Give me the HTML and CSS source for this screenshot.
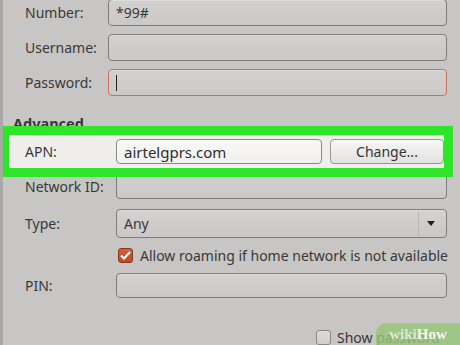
FILE: index.html
```html
<!DOCTYPE html>
<html>
<head>
<meta charset="utf-8">
<link rel="stylesheet" href="styles.css">
</head>
<body>
<div class="window">
  <div class="top">
    <label class="label">Number:</label>
    <div class="field">*99#</div>
    <label class="label">Username:</label>
    <div class="field"></div>
    <label class="label">Password:</label>
    <div class="field field-error"><span class="caret"></span></div>
  </div>
  <div class="section-title">Advanced</div>
  <div class="highlight">
    <label class="label apn-label">APN:</label>
    <div class="field field-light apn-field">airtelgprs.com</div>
    <button class="button">Change...</button>
  </div>
  <div class="lower">
    <label class="label">Network ID:</label>
    <div class="field"></div>
    <label class="label">Type:</label>
    <div class="field combo"><span class="combo-text">Any</span><span class="combo-sep"></span><span class="combo-arrow"></span></div>
    <div class="check-row">
      <span class="checkbox checked"><svg width="11" height="9" viewBox="0 0 11 9"><path d="M1 4.5 L4 7.5 L10 1" fill="none" stroke="#fff" stroke-width="2"/></svg></span>
      <span>Allow roaming if home network is not available</span>
    </div>
    <label class="label">PIN:</label>
    <div class="field"></div>
  </div>
  <div class="show-row">
    <span class="checkbox"></span>
    <span>Show password</span>
  </div>
  <div class="watermark"><span class="wm-wiki">wiki</span><span class="wm-how">How</span></div>
</div>
</body>
</html>
```

FILE: styles.css
```css
html, body {
  margin: 0;
  height: 100%;
  overflow: hidden;
}
body {
  background: #c7c6c4;
  font-family: "Noto Sans", "Open Sans", sans-serif;
  font-size: 14px;
  color: #383838;
}
.window {
  position: relative;
  height: 345px;
  box-sizing: border-box;
  border-left: 3px solid #a9a8a6;
  overflow: hidden;
}
.top {
  display: grid;
  grid-template-columns: 83px 339px;
  row-gap: 8px;
  align-items: center;
  padding-left: 22px;
  margin-top: -1px;
}
.label {
  white-space: nowrap;
}
.field {
  height: 27px;
  box-sizing: border-box;
  border: 1px solid #7f7d7b;
  border-radius: 4px;
  background: linear-gradient(#d2d1cf, #cac9c7);
  display: flex;
  align-items: center;
  padding-left: 7px;
  box-shadow: inset 0 1px 0 rgba(255,255,255,0.25);
}
.field-error {
  border-color: #cf6e5c;
}
.caret {
  width: 1px;
  height: 16px;
  background: #222;
}
.section-title {
  margin-top: 17px;
  height: 13px;
  line-height: 20px;
  padding-left: 10px;
  font-weight: bold;
  font-size: 14.5px;
}
.highlight {
  position: relative;
  z-index: 2;
  margin-left: -3px;
  width: 453px;
  height: 51px;
  box-sizing: border-box;
  border: 9px solid #2fe52a;
  background: #efeeec;
  display: flex;
  align-items: center;
  padding-left: 16px;
}
.apn-label {
  width: 91px;
  flex: none;
}
.field-light {
  background: linear-gradient(#f8f8f7, #f1f0ef);
  border-color: #8c8a88;
}
.apn-field {
  width: 206px;
  height: 25px;
  flex: none;
  font-size: 15px;
  color: #2e2e2e;
}
.button {
  margin-left: 8px;
  width: 116px;
  height: 25px;
  box-sizing: border-box;
  border: 1px solid #9a9896;
  border-radius: 4px;
  background: linear-gradient(#f7f7f6, #e3e2e0);
  font-family: inherit;
  font-size: 14px;
  color: #333;
  padding: 0;
}
.lower {
  display: grid;
  grid-template-columns: 91px 331px;
  grid-template-rows: 26px 29px 15px 25px;
  row-gap: 10px;
  align-items: center;
  padding-left: 22px;
  margin-top: -4px;
}
.lower .field {
  height: 100%;
}
.combo {
  position: relative;
  background: linear-gradient(#d4d3d1, #c9c8c6);
}
.combo-text {
  flex: 1;
}
.combo-sep {
  width: 1px;
  height: 23px;
  background: #b9b8b6;
  margin-right: 8px;
}
.combo-arrow {
  width: 0;
  height: 0;
  border-left: 4px solid transparent;
  border-right: 4px solid transparent;
  border-top: 5px solid #1e1e1e;
  margin-right: 11px;
}
.check-row {
  grid-column: 2;
  display: flex;
  align-items: center;
  gap: 7px;
  padding-left: 2px;
  white-space: nowrap;
}
.checkbox {
  width: 15px;
  height: 15px;
  box-sizing: border-box;
  border: 1px solid #8a8886;
  border-radius: 3px;
  background: linear-gradient(#dcdbd9, #cfcecc);
  display: flex;
  align-items: center;
  justify-content: center;
  flex: none;
}
.checkbox.checked {
  background: linear-gradient(#d0603a, #b94b27);
  border-color: #8c3519;
}
.show-row {
  display: flex;
  align-items: center;
  gap: 6px;
  margin-top: 30px;
  padding-left: 313px;
  white-space: nowrap;
}
.watermark {
  position: absolute;
  right: 0;
  bottom: 0;
  width: 84px;
  height: 22px;
  background: rgba(150, 196, 122, 0.82);
  border-top-left-radius: 10px;
  display: flex;
  align-items: center;
  justify-content: center;
  font-family: "Liberation Serif", serif;
  font-weight: bold;
  font-size: 15px;
}
.wm-wiki {
  color: rgba(235, 245, 228, 0.8);
}
.wm-how {
  color: #f6f9f3;
}
```
